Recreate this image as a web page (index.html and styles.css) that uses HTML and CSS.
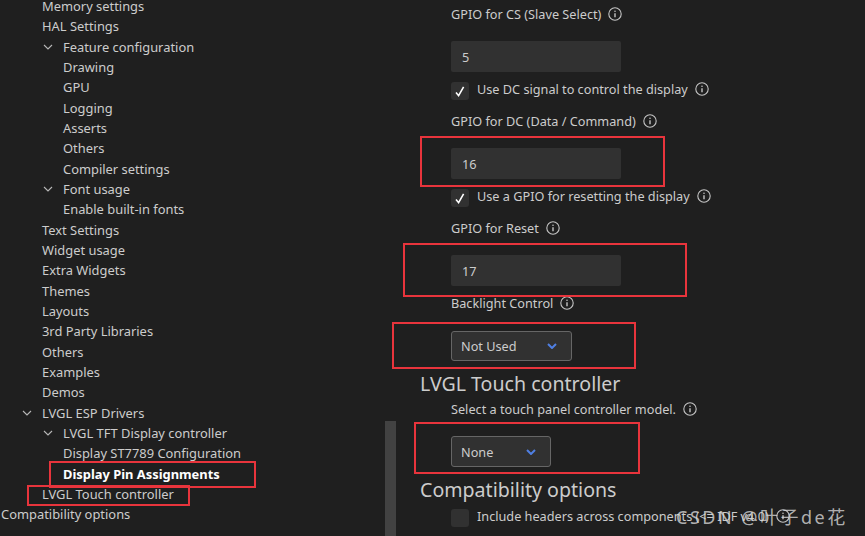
FILE: index.html
```html
<!DOCTYPE html>
<html lang="en">
<head>
  <meta charset="UTF-8">
  <meta name="viewport" content="width=device-width, initial-scale=1.0">
  <title>LVGL Settings</title>
  <link rel="stylesheet" href="styles.css">
</head>
<body>

  <div class="page">
    <nav class="tree">
      <div class="row t1">Memory settings</div>
      <div class="row t1">HAL Settings</div>
      <div class="row t2"><span class="twisty"><svg viewBox="0 0 10 6" width="10" height="6"><path d="M1 1l4 4 4-4" /></svg></span>Feature configuration</div>
      <div class="row t2">Drawing</div>
      <div class="row t2">GPU</div>
      <div class="row t2">Logging</div>
      <div class="row t2">Asserts</div>
      <div class="row t2">Others</div>
      <div class="row t2">Compiler settings</div>
      <div class="row t2"><span class="twisty"><svg viewBox="0 0 10 6" width="10" height="6"><path d="M1 1l4 4 4-4" /></svg></span>Font usage</div>
      <div class="row t2">Enable built-in fonts</div>
      <div class="row t1">Text Settings</div>
      <div class="row t1">Widget usage</div>
      <div class="row t1">Extra Widgets</div>
      <div class="row t1">Themes</div>
      <div class="row t1">Layouts</div>
      <div class="row t1">3rd Party Libraries</div>
      <div class="row t1">Others</div>
      <div class="row t1">Examples</div>
      <div class="row t1">Demos</div>
      <div class="row t1"><span class="twisty"><svg viewBox="0 0 10 6" width="10" height="6"><path d="M1 1l4 4 4-4" /></svg></span>LVGL ESP Drivers</div>
      <div class="row t2"><span class="twisty"><svg viewBox="0 0 10 6" width="10" height="6"><path d="M1 1l4 4 4-4" /></svg></span>LVGL TFT Display controller</div>
      <div class="row t2">Display ST7789 Configuration</div>
      <div class="row t2 active">Display Pin Assignments</div>
      <div class="row t1">LVGL Touch controller</div>
      <div class="row t0">Compatibility options</div>

      <div class="slider"></div>
      <div class="mark mark-pins"></div>
      <div class="mark mark-touch"></div>
    </nav>

    <main class="settings">
      <div class="setting">
        <div class="label">GPIO for CS (Slave Select)<span class="info"><svg viewBox="0 0 14 14" width="14" height="14"><circle cx="7" cy="7" r="6.2" /><path d="M7 6.2v4" /><circle class="dot" cx="7" cy="4.2" r="0.8" /></svg></span></div>
        <div class="input">5</div>
      </div>

      <div class="check"><span class="box on"><svg viewBox="0 0 18 18" width="18" height="18"><path d="M5 10.5l2.6 3.2L12.6 4.8" /></svg></span>Use DC signal to control the display<span class="info"><svg viewBox="0 0 14 14" width="14" height="14"><circle cx="7" cy="7" r="6.2" /><path d="M7 6.2v4" /><circle class="dot" cx="7" cy="4.2" r="0.8" /></svg></span></div>

      <div class="setting">
        <div class="label">GPIO for DC (Data / Command)<span class="info"><svg viewBox="0 0 14 14" width="14" height="14"><circle cx="7" cy="7" r="6.2" /><path d="M7 6.2v4" /><circle class="dot" cx="7" cy="4.2" r="0.8" /></svg></span></div>
        <div class="input">16</div>
      </div>

      <div class="check"><span class="box on"><svg viewBox="0 0 18 18" width="18" height="18"><path d="M5 10.5l2.6 3.2L12.6 4.8" /></svg></span>Use a GPIO for resetting the display<span class="info"><svg viewBox="0 0 14 14" width="14" height="14"><circle cx="7" cy="7" r="6.2" /><path d="M7 6.2v4" /><circle class="dot" cx="7" cy="4.2" r="0.8" /></svg></span></div>

      <div class="setting">
        <div class="label">GPIO for Reset<span class="info"><svg viewBox="0 0 14 14" width="14" height="14"><circle cx="7" cy="7" r="6.2" /><path d="M7 6.2v4" /><circle class="dot" cx="7" cy="4.2" r="0.8" /></svg></span></div>
        <div class="input">17</div>
      </div>

      <div class="setting after-input">
        <div class="label">Backlight Control<span class="info"><svg viewBox="0 0 14 14" width="14" height="14"><circle cx="7" cy="7" r="6.2" /><path d="M7 6.2v4" /><circle class="dot" cx="7" cy="4.2" r="0.8" /></svg></span></div>
        <div class="select wide">Not Used<svg viewBox="0 0 10 6" width="10" height="6"><path d="M1 1l4 4 4-4" /></svg></div>
      </div>

      <h2>LVGL Touch controller</h2>
      <div class="setting first">
        <div class="label">Select a touch panel controller model.<span class="info"><svg viewBox="0 0 14 14" width="14" height="14"><circle cx="7" cy="7" r="6.2" /><path d="M7 6.2v4" /><circle class="dot" cx="7" cy="4.2" r="0.8" /></svg></span></div>
        <div class="select">None<svg viewBox="0 0 10 6" width="10" height="6"><path d="M1 1l4 4 4-4" /></svg></div>
      </div>

      <h2>Compatibility options</h2>
      <div class="check first"><span class="box"></span>Include headers across components (&lt;= IDF v4.0)<span class="info"><svg viewBox="0 0 14 14" width="14" height="14"><circle cx="7" cy="7" r="6.2" /><path d="M7 6.2v4" /><circle class="dot" cx="7" cy="4.2" r="0.8" /></svg></span></div>
    </main>

    <div class="mark mark-dc"></div>
    <div class="mark mark-reset"></div>
    <div class="mark mark-backlight"></div>
    <div class="mark mark-model"></div>
    <div class="watermark">CSDN @叶子de花</div>
  </div>

</body>
</html>
```

FILE: styles.css
```css
body {
  margin: 0;
  background-color: #1f1f1f;
  color: #cccccc;
  font-family: "Noto Sans", "Noto Sans CJK SC", sans-serif;
  font-size: 13px;
  overflow: hidden;
}

.page {
  position: relative;
  display: flex;
  width: 865px;
  height: 536px;
  overflow: hidden;
}

/* left tree */
.tree {
  position: relative;
  width: 396px;
  flex-shrink: 0;
  margin-top: -4px;
  font-size: 12.9px;
}

.row {
  display: flex;
  align-items: center;
  height: 20.33px;
  white-space: nowrap;
}

.t0 { padding-left: 1px; }
.t1 { padding-left: 42px; }
.t2 { padding-left: 63px; }

.twisty {
  display: flex;
  align-items: center;
  width: 21px;
  margin-left: -21px;
  padding-left: 1px;
  box-sizing: border-box;
}

.twisty path {
  fill: none;
  stroke: #b8b8b8;
  stroke-width: 1.1;
}

.active {
  font-weight: bold;
  color: #ffffff;
}

.slider {
  position: absolute;
  left: 385px;
  top: 425px;
  width: 11px;
  height: 120px;
  background: #424242;
}

/* right settings */
.settings {
  flex: 1;
  padding: 4px 0 0 24px;
  font-size: 12.7px;
}

.setting {
  padding-left: 31px;
  margin-top: 11px;
}

.setting:first-child {
  margin-top: 0;
}

.setting.after-input {
  margin-top: 7px;
}

.label {
  display: flex;
  align-items: center;
  height: 20px;
  white-space: nowrap;
}

.info {
  display: inline-flex;
  margin-left: 7px;
}

.info circle {
  fill: none;
  stroke: #c5c5c5;
  stroke-width: 1.1;
}

.info path {
  stroke: #c5c5c5;
  stroke-width: 1.4;
}

.info .dot {
  fill: #c5c5c5;
  stroke: none;
}

.input {
  width: 170px;
  height: 31px;
  margin-top: 17px;
  padding-left: 11px;
  box-sizing: border-box;
  background: #313131;
  border-radius: 2px;
  display: flex;
  align-items: center;
}

.check {
  display: flex;
  align-items: flex-start;
  height: 20px;
  line-height: 18px;
  margin-top: 8px;
  padding-left: 31px;
  white-space: nowrap;
}

.check .info {
  margin-top: 2px;
}

.check.first {
  margin-top: 3px;
}

.box {
  width: 18px;
  height: 18px;
  margin-right: 8px;
  margin-top: 2px;
  background: #313131;
  border-radius: 3px;
  flex-shrink: 0;
}

.box svg {
  display: block;
}

.box path {
  fill: none;
  stroke: #ffffff;
  stroke-width: 1.6;
}

.select {
  width: 100px;
  height: 31px;
  margin-top: 17px;
  padding: 0 14px 0 9px;
  box-sizing: border-box;
  background: #313131;
  border: 1px solid #666666;
  border-radius: 3px;
  display: flex;
  align-items: center;
  justify-content: space-between;
}

.select.wide {
  width: 121px;
  height: 30px;
  margin-top: 18px;
}

.select path {
  fill: none;
  stroke: #4f7fe3;
  stroke-width: 2;
}

h2 {
  margin: 9px 0 0;
  height: 28px;
  line-height: 28px;
  font-size: 19.6px;
  font-weight: normal;
  color: #cccccc;
}

h2 + .setting {
  margin-top: 1px;
}

/* red annotation boxes */
.mark {
  position: absolute;
  border: 2px solid #e8343c;
  box-sizing: border-box;
}

.mark-pins { left: 49px; top: 465px; width: 207px; height: 27px; }
.mark-touch { left: 27px; top: 489px; width: 163px; height: 21px; }
.mark-dc { left: 420px; top: 136px; width: 245px; height: 51px; }
.mark-reset { left: 403px; top: 243px; width: 284px; height: 54px; }
.mark-backlight { left: 392px; top: 322px; width: 244px; height: 47px; }
.mark-model { left: 414px; top: 422px; width: 226px; height: 52px; }

.watermark {
  position: absolute;
  left: 676px;
  top: 503px;
  font-size: 18px;
  letter-spacing: 2.5px;
  color: rgba(215, 215, 215, 0.8);
  white-space: nowrap;
}
```
